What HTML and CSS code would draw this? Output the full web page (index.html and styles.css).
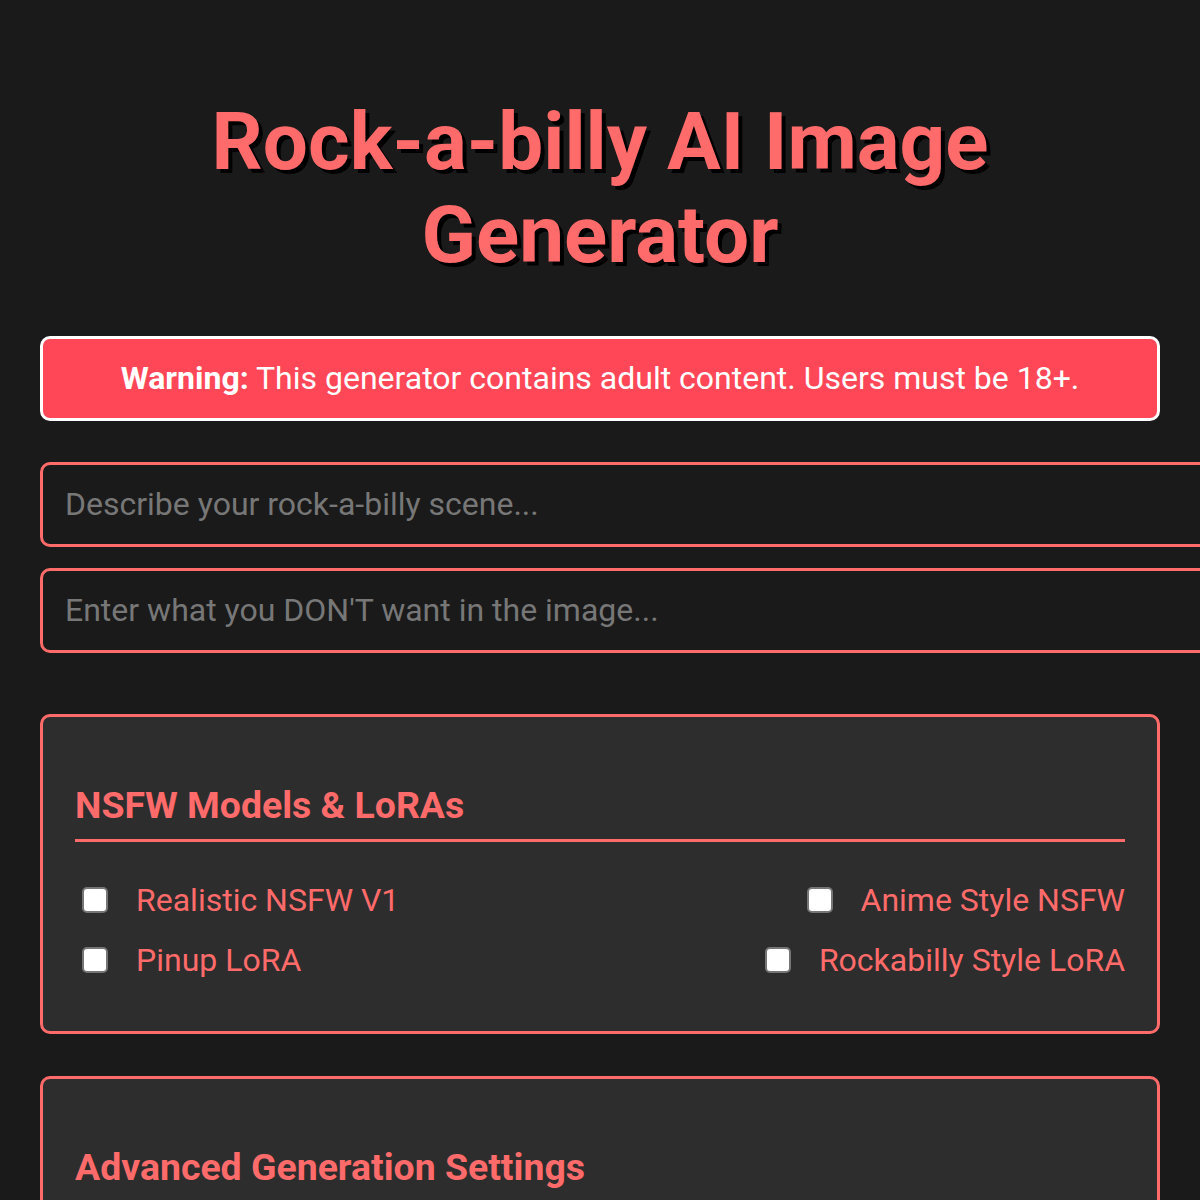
FILE: index.html
```html
<!DOCTYPE html>
<html lang="en">
<head>
<meta charset="utf-8">
<title>Rock-a-billy AI Image Generator</title>
<link rel="stylesheet" href="styles.css">
</head>
<body>
<div class="container">
  <h1 class="title">Rock-a-billy AI Image Generator</h1>
  <div class="warning"><strong>Warning:</strong> This generator contains adult content. Users must be 18+.</div>
  <input class="field" type="text" placeholder="Describe your rock-a-billy scene...">
  <input class="field" type="text" placeholder="Enter what you DON'T want in the image...">
  <section class="panel">
    <h2 class="panel-title">NSFW Models &amp; LoRAs</h2>
    <div class="options">
      <label class="option"><input type="checkbox" class="check"><span>Realistic NSFW V1</span></label>
      <label class="option right"><input type="checkbox" class="check"><span>Anime Style NSFW</span></label>
      <label class="option"><input type="checkbox" class="check"><span>Pinup LoRA</span></label>
      <label class="option right"><input type="checkbox" class="check"><span>Rockabilly Style LoRA</span></label>
    </div>
  </section>
  <section class="panel">
    <h2 class="panel-title">Advanced Generation Settings</h2>
    <div class="spacer"></div>
  </section>
</div>
</body>
</html>
```
FILE: styles.css
```css
* { box-sizing: content-box; }
html, body {
  margin: 0;
  padding: 0;
  background: #1a1a1a;
  font-family: Roboto, "Liberation Sans", Arial, sans-serif;
  color: #ff6b6b;
}
.container {
  padding: 42px 40px 40px;
}
.title {
  margin: 54px 0 54px;
  text-align: center;
  font-size: 80px;
  font-weight: 700;
  line-height: 93px;
  color: #ff6b6b;
  text-shadow: 4px 4px 0 #000;
}
.warning {
  background: #ff4757;
  border: 3px solid #ffffff;
  border-radius: 10px;
  color: #ffffff;
  font-size: 32px;
  line-height: 37px;
  padding: 21px 20px;
  text-align: center;
  margin-bottom: 41px;
}
.warning strong { font-weight: 700; }
.field {
  display: block;
  width: 100%;
  margin: 0 0 21px;
  padding: 21px 22px;
  border: 3px solid #ff6b6b;
  border-radius: 10px;
  background: #1a1a1a;
  color: #eeeeee;
  font-family: Roboto, "Liberation Sans", Arial, sans-serif;
  font-size: 32px;
  line-height: 37px;
  height: 37px;
  outline: none;
}
.field::placeholder { color: #777777; }
.panel {
  margin-top: 61px;
  background: #2d2d2d;
  border: 3px solid #ff6b6b;
  border-radius: 10px;
  padding: 0 32px 32px;
}
.panel + .panel { margin-top: 42px; }
.panel-title {
  margin: 0;
  padding-top: 66px;
  padding-bottom: 12px;
  border-bottom: 3px solid #ff6b6b;
  font-size: 37.44px;
  line-height: 44px;
  font-weight: 700;
  color: #ff6b6b;
}
.options {
  display: grid;
  grid-template-columns: 1fr 1fr;
  row-gap: 6px;
  padding-top: 31px;
  padding-bottom: 12px;
}
.option {
  display: flex;
  align-items: center;
  padding: 8px 0;
  font-size: 32px;
  line-height: 38px;
  color: #ff6b6b;
}
.option.right { justify-self: end; }
.check {
  -webkit-appearance: none;
  appearance: none;
  width: 22px;
  height: 22px;
  margin: 0 28px 0 7px;
  background: #ffffff;
  border: 2px solid #767676;
  border-radius: 5px;
}
.spacer { height: 200px; }
```
